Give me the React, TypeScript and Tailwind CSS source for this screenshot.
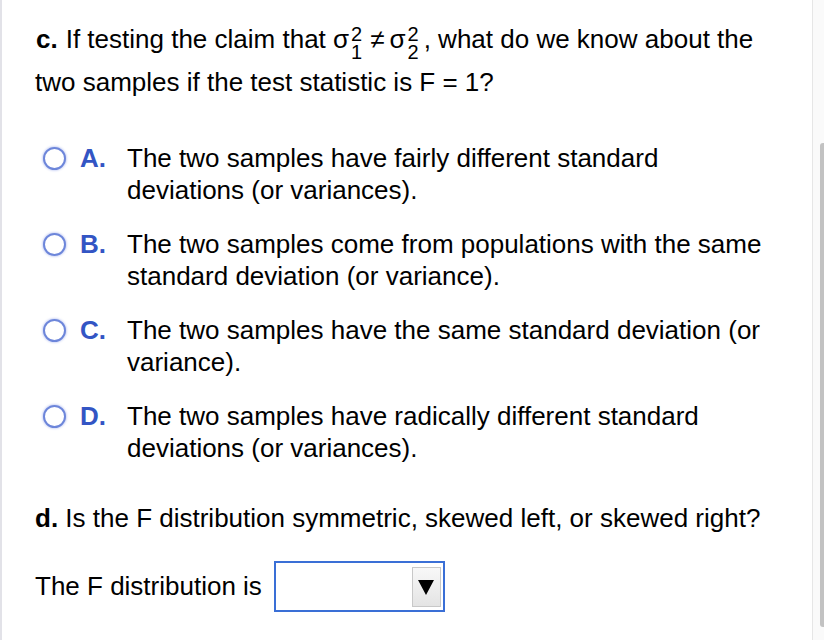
import React from "react";

const Sig = ({ sub }: { sub: string }) => (
  <span className="inline-flex items-center">
    <span>σ</span>
    <span className="inline-flex flex-col items-center text-[20px] leading-[18px] ml-[2px] relative top-[4px]">
      <span>2</span>
      <span>{sub}</span>
    </span>
  </span>
);

const Radio = () => (
  <span className="w-[23px] h-[23px] rounded-full border-2 border-[#6d86da] shadow-[0_0_2px_1px_rgba(120,140,230,0.35)] bg-white shrink-0 mt-[5px]" />
);

const Option = ({ letter, l1, l2 }: { letter: string; l1: string; l2: string }) => (
  <div className="flex items-start">
    <div className="w-[92px] flex items-start pl-[8px]">
      <Radio />
      <span className="ml-[14px] font-bold text-[#3355c4] leading-[32px]">{letter}</span>
    </div>
    <div className="leading-[32px]">
      <div>{l1}</div>
      <div>{l2}</div>
    </div>
  </div>
);

export default function App() {
  return (
    <div
      className="w-[824px] h-[640px] bg-white flex text-[26px] text-black overflow-hidden"
      style={{ fontFamily: '"Liberation Sans", Arial, sans-serif' }}
    >
      <div className="w-[2px] h-full bg-[#e2e2e8] shrink-0" />
      <div className="flex-1 pl-[33px] pt-[17px]">
        <div className="leading-[42px]">
          <div className="flex items-center h-[44px] ml-[1px]">
            <span className="font-bold">c.</span>
            <span className="ml-[8px] whitespace-pre">If testing the claim that </span>
            <Sig sub="1" />
            <span className="ml-[8px] mr-[5px]">≠</span>
            <Sig sub="2" />
            <span className="ml-[5px] whitespace-pre">, what do we know about the</span>
          </div>
          <div>two samples if the test statistic is F = 1?</div>
        </div>
        <div className="mt-[39px] flex flex-col gap-[22px]">
          <Option letter="A." l1="The two samples have fairly different standard" l2="deviations (or variances)." />
          <Option letter="B." l1="The two samples come from populations with the same" l2="standard deviation (or variance)." />
          <Option letter="C." l1="The two samples have the same standard deviation (or" l2="variance)." />
          <Option letter="D." l1="The two samples have radically different standard" l2="deviations (or variances)." />
        </div>
        <div className="mt-[38px] leading-[32px]">
          <span className="font-bold">d.</span> Is the F distribution symmetric, skewed left, or skewed right?
        </div>
        <div className="mt-[27px] flex items-center">
          <span>The F distribution is</span>
          <div className="ml-[12px] w-[171px] h-[51px] border-2 border-[#3a6fd6] bg-white flex items-center justify-end pr-[2px]">
            <div className="w-[29px] h-[40px] border border-[#c8c8c8] bg-gradient-to-b from-[#f8f8f8] to-[#e4e4e4] flex items-center justify-center">
              <svg width="16" height="18" viewBox="0 0 16 18">
                <polygon points="0,2 16,2 8,17" fill="#000" />
              </svg>
            </div>
          </div>
        </div>
      </div>
      <div className="w-[12px] h-full bg-[#fafafa] border-l border-[#e6e6e6] shrink-0 flex justify-end">
        <div className="w-[4px] mt-[143px] h-[484px] bg-[#c2c2c2] rounded-l-[3px]" />
      </div>
    </div>
  );
}
